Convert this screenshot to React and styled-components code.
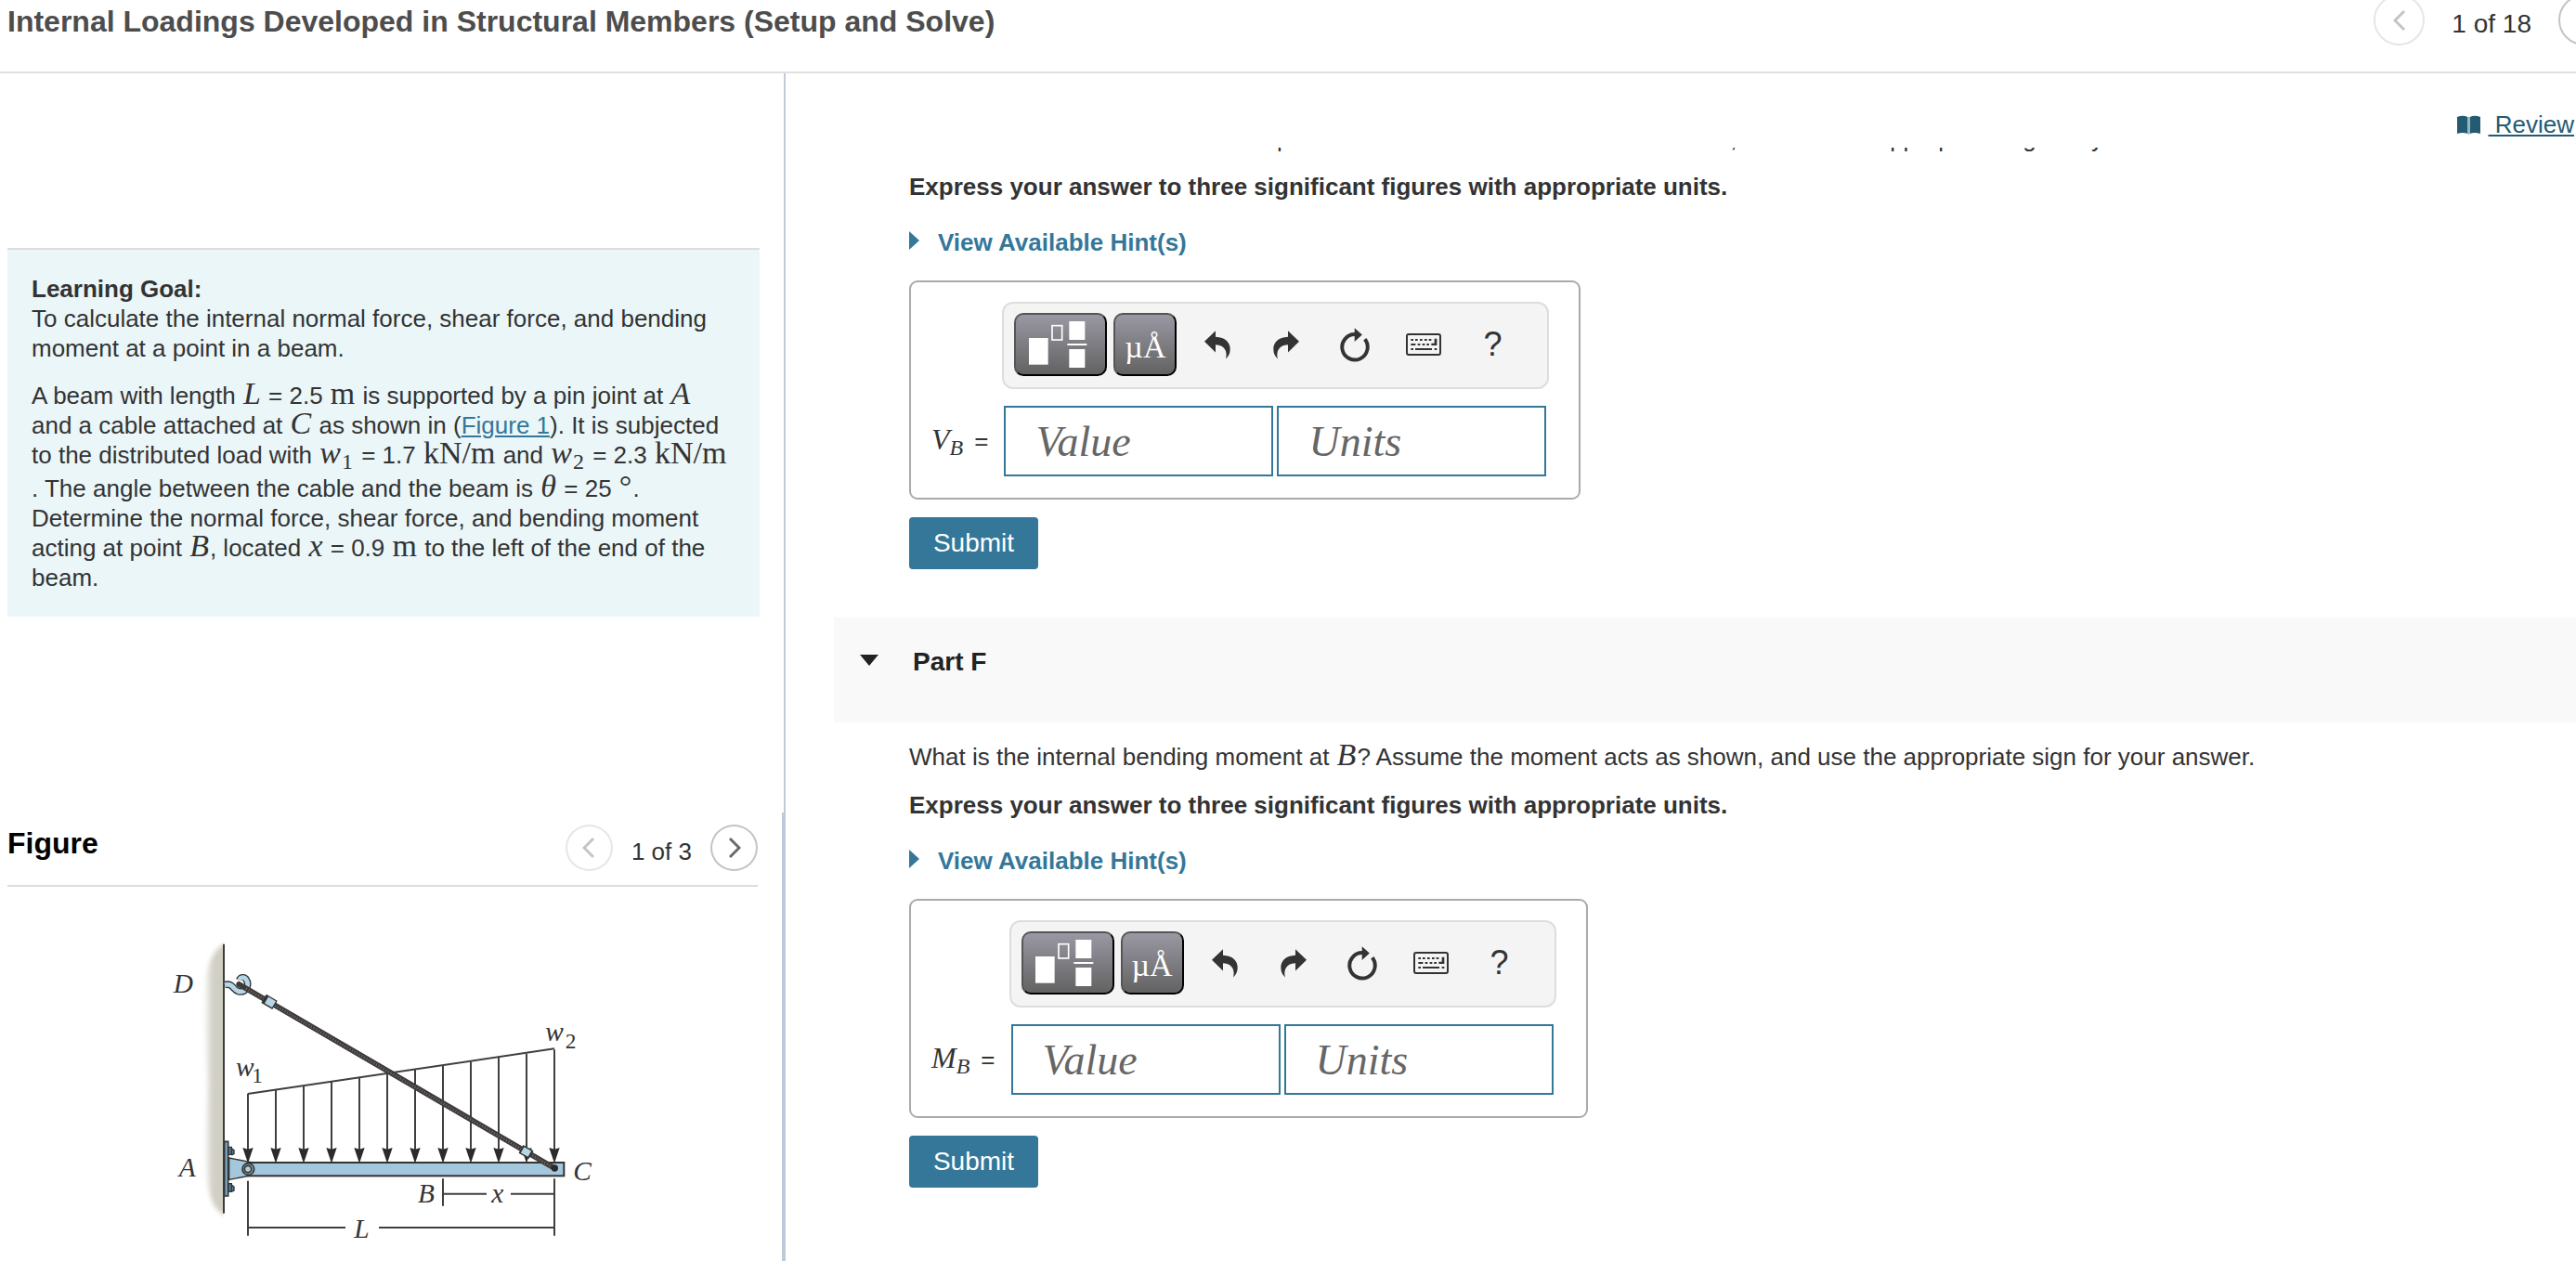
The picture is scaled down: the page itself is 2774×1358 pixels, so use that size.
import React from "react";
import styled, { createGlobalStyle } from "styled-components";

const GlobalStyle = createGlobalStyle`
  * {
    box-sizing: border-box;
  }

  body {
    margin: 0;
    color: #333;
    overflow: hidden;
    background-color: #fff;
    font-size: 26px;
    line-height: 32px;
    font-family: "Liberation Sans", Arial, sans-serif;
  }

  p,
  h1,
  h2 {
    margin: 0;
  }

  button,
  input {
    font-family: inherit;
  }
`;

const ChevronLeft = () => (
  <svg width="14" height="24" viewBox="0 0 14 24" fill="none" aria-hidden="true">
    <path d="M12 2L2 12l10 10" stroke="currentColor" strokeWidth="3" />
  </svg>
);

const ChevronRight = () => (
  <svg width="14" height="24" viewBox="0 0 14 24" fill="none" aria-hidden="true">
    <path d="M2 2l10 10L2 22" stroke="currentColor" strokeWidth="3" />
  </svg>
);

const BookIcon = () => (
  <svg width="25" height="22" viewBox="0 0 75 66" aria-hidden="true">
    <path d="M0 6C12 1 24 1 34 6V60C24 56 12 56 0 60Z" fill="currentColor" />
    <path d="M41 6C51 1 63 1 75 6V60C63 56 51 56 41 60Z" fill="currentColor" />
    <path d="M34 6h7v54l-3 3-4-3z" fill="#93b0bd" />
  </svg>
);

const TemplateIcon = () => (
  <svg width="63" height="52" viewBox="0 0 189 156" fill="#fff" aria-hidden="true">
    <rect x="0" y="57" width="62" height="86" />
    <rect x="75" y="17" width="32" height="46" fill="none" stroke="#fff" strokeWidth="5" />
    <rect x="130" y="3" width="51" height="60" />
    <rect x="124" y="75" width="63" height="6" />
    <rect x="130" y="93" width="51" height="60" />
  </svg>
);

const UndoIcon = () => (
  <svg width="28" height="31" viewBox="0 0 84 92" fill="#333" aria-hidden="true">
    <path d="M0 35L36 0V20C68 21 84 40 83 60C83 73 78 82 69 91C75 70 68 46 36 45V70Z" />
  </svg>
);

const RedoIcon = () => (
  <svg width="28" height="31" viewBox="0 0 84 92" fill="#333" aria-hidden="true">
    <path d="M84 35L48 0V20C16 21 0 40 1 60C1 73 6 82 15 91C9 70 16 46 48 45V70Z" />
  </svg>
);

const ResetIcon = () => (
  <svg width="32" height="37" viewBox="0 0 98 112" aria-hidden="true">
    <path
      d="M82 37A42 42 0 1 1 49 21"
      fill="none"
      stroke="#333"
      strokeWidth="12"
    />
    <path d="M48 0L73 22L48 45Z" fill="#333" />
  </svg>
);

const topKeys = [16, 30, 45, 60, 74];
const midKeys = [16, 23, 38, 53, 67];

const KeyboardIcon = () => (
  <svg width="38" height="24" viewBox="0 0 114 72" fill="#333" aria-hidden="true">
    <rect x="3" y="3" width="108" height="66" rx="6" fill="none" stroke="#333" strokeWidth="6" />
    {topKeys.map((x) => (
      <rect key={x} x={x} y="18" width="8" height="6" />
    ))}
    {midKeys.map((x) => (
      <rect key={x} x={x} y="33" width="8" height="6" />
    ))}
    <path d="M92 17h8v22H82v-7h10z" />
    <rect x="16" y="48" width="8" height="6" />
    <rect x="30" y="48" width="54" height="6" />
    <rect x="92" y="48" width="8" height="6" />
  </svg>
);

const loads = [0, 1, 2, 3, 4, 5, 6, 7, 8, 9, 10, 11];

const BeamFigure = () => (
  <Drawing viewBox="0 0 1560 1104" role="img" aria-label="Beam supported at A and by cable CD">
    <defs>
      <linearGradient id="wall" x1="0" x2="1" y1="0" y2="0">
        <stop offset="0" stopColor="#fff" />
        <stop offset="0.35" stopColor="#d2d0c4" />
        <stop offset="1" stopColor="#cfcdc1" />
      </linearGradient>
      <filter id="soft" x="-30%" y="-10%" width="160%" height="120%">
        <feGaussianBlur stdDeviation="8" />
      </filter>
      <clipPath id="wallSide">
        <rect x="170" y="50" width="102" height="940" />
      </clipPath>
    </defs>

    <g clipPath="url(#wallSide)">
      <path
        d="M290 75C240 85 212 150 208 260C206 380 222 460 218 570C214 700 210 780 220 850C228 910 250 955 290 960Z"
        fill="url(#wall)"
        filter="url(#soft)"
      />
    </g>
    <path d="M273 80V950" stroke="#3b3b3b" strokeWidth="6" />

    <g stroke="#3f3f3f" strokeWidth="6" fill="none">
      <path d="M350 564L1341 418" />
      {loads.map((i) => (
        <path key={i} d={`M${351 + i * 90} ${564 - i * 13}V760`} />
      ))}
    </g>

    <path d="M275 718h12v176h-12z" fill="#7fa9c0" stroke="#333" strokeWidth="5" />
    <path
      d="M288 736h10v24h-10zM298 740l8 6v12l-8 4M288 854h10v26h-10zM298 858l8 6v12l-8 4"
      fill="#557f98"
      stroke="#333"
      strokeWidth="4"
    />
    <path d="M290 771L360 785V828L290 841Z" fill="#a3c7dc" stroke="#333" strokeWidth="4" />
    <rect x="352" y="786" width="1020" height="43" fill="#a3c7dc" stroke="#333" strokeWidth="6" />
    <circle cx="352" cy="807" r="19" fill="#86a6b8" stroke="#333" strokeWidth="5" />
    <circle cx="351" cy="807" r="11" fill="#b7ccd7" stroke="#333" strokeWidth="5" />

    {loads.map((i) => (
      <path
        key={i}
        d={`M${351 + i * 90} 788l-17 -50l17 5l17 -5z`}
        fill="#2b2b2b"
      />
    ))}

    <path
      d="M276 212C306 204 300 232 326 234C350 234 354 206 346 196C340 184 326 188 324 196"
      fill="none"
      stroke="#333"
      strokeWidth="23"
    />
    <path
      d="M276 212C306 204 300 232 326 234C350 234 354 206 346 196C340 184 326 188 324 196"
      fill="none"
      stroke="#b5d6e8"
      strokeWidth="15"
    />
    <path d="M322 210L1341 804" stroke="#3d3a3a" strokeWidth="18" strokeLinecap="round" />
    <path d="M345 224L1335 801" stroke="#77706f" strokeWidth="8" strokeDasharray="3 6" />
    <path d="M402 256L438 277" stroke="#333" strokeWidth="32" />
    <path d="M411 261L435 275" stroke="#b5d6e8" strokeWidth="24" />
    <path d="M1233 742L1266 761" stroke="#333" strokeWidth="30" />
    <path d="M1238 745L1261 758" stroke="#b5d6e8" strokeWidth="22" />
    <circle cx="1342" cy="804" r="11" fill="#2b2b2b" />

    <g stroke="#3f3f3f" strokeWidth="6" fill="none">
      <path d="M351 845V1022M1341 838V1022M981 838V926" />
      <path d="M981 887H1122M1200 887H1341M351 996H666M774 996H1341" />
    </g>

    <text x="110" y="237">D</text>
    <text x="128" y="831">A</text>
    <text x="1402" y="842">C</text>
    <text x="900" y="915">B</text>
    <text x="1138" y="915">x</text>
    <text x="694" y="1028">L</text>
    <text x="312" y="506">w</text>
    <text x="1312" y="392">w</text>
    <Digit x="364" y="529">1</Digit>
    <Digit x="1376" y="417">2</Digit>
  </Drawing>
);

const Pager = ({ label, large }) => (
  <PagerRow $large={large}>
    <RoundButton $large={large} disabled aria-label="Previous">
      <ChevronLeft />
    </RoundButton>
    <PagerLabel $large={large}>{label}</PagerLabel>
    <RoundButton $large={large} aria-label="Next">
      {large ? null : <ChevronRight />}
    </RoundButton>
  </PagerRow>
);

const Answer = ({ symbol, id }) => (
  <>
    <Instruction>
      Express your answer to three significant figures with appropriate units.
    </Instruction>
    <HintButton type="button">
      <HintArrow />
      View Available Hint(s)
    </HintButton>
    <AnswerBox>
      <Toolbar>
        <DarkButton type="button" $wide aria-label="Templates">
          <TemplateIcon />
        </DarkButton>
        <DarkButton type="button" aria-label="Symbols">
          µÅ
        </DarkButton>
        <Tools>
          <ToolButton type="button" aria-label="Undo">
            <UndoIcon />
          </ToolButton>
          <ToolButton type="button" aria-label="Redo">
            <RedoIcon />
          </ToolButton>
          <ToolButton type="button" aria-label="Reset">
            <ResetIcon />
          </ToolButton>
          <ToolButton type="button" aria-label="Keyboard shortcuts">
            <KeyboardIcon />
          </ToolButton>
          <ToolButton type="button" aria-label="Help">
            ?
          </ToolButton>
        </Tools>
      </Toolbar>
      <AnswerLabel htmlFor={id}>
        <LabelVar>{symbol}</LabelVar>
        <SubVar>B</SubVar>
        <Equals>=</Equals>
      </AnswerLabel>
      <Fields>
        <Field id={id} type="text" placeholder="Value" />
        <Field type="text" placeholder="Units" aria-label="Units" />
      </Fields>
    </AnswerBox>
    <SubmitButton type="button">Submit</SubmitButton>
  </>
);

const App = () => {
  return (
    <Page>
      <GlobalStyle />
      <Header>
        <Title>
          Internal Loadings Developed in Structural Members (Setup and Solve)
        </Title>
        <Pager label="1 of 18" large />
      </Header>

      <Main>
        <Side>
          <GoalPane>
            <Goal>
              <p>
                <strong>Learning Goal:</strong>
                <br />
                To calculate the internal normal force, shear force, and bending
                moment at a point in a beam.
              </p>
              <p>
                A beam with length <Var>L</Var> = 2.5 <Unit>m</Unit> is supported
                by a pin joint at <Var>A</Var>
                <br />
                and a cable attached at <Var>C</Var> as shown in (
                <FigureLink href="#figure">Figure 1</FigureLink>). It is
                subjected
                <br />
                to the distributed load with <Var>w</Var>
                <SubNum>1</SubNum> = 1.7 <Unit>kN/m</Unit> and <Var>w</Var>
                <SubNum>2</SubNum> = 2.3 <Unit>kN/m</Unit>
                <br />. The angle between the cable and the beam is{" "}
                <Var>θ</Var> = 25 <Degree>°</Degree>.
                <br />
                Determine the normal force, shear force, and bending moment
                acting at point <Var>B</Var>, located <Var>x</Var> = 0.9{" "}
                <Unit>m</Unit> to the left of the end of the beam.
              </p>
            </Goal>
          </GoalPane>

          <FigurePane id="figure">
            <FigureHead>
              <h2>Figure</h2>
              <Pager label="1 of 3" />
            </FigureHead>
            <BeamFigure />
          </FigurePane>
        </Side>

        <Content>
          <ReviewRow>
            <BookIcon />
            <ReviewLink href="#review">&nbsp;Review</ReviewLink>
          </ReviewRow>
          <Scroll>
            <PartBody $scrolled>
              <p>
                What is the internal shear force at point <Var>B</Var>? Assume
                the shear acts as shown, and use the appropriate sign for your
                answer.
              </p>
              <Answer symbol="V" id="shear" />
            </PartBody>
            <PartHeader>
              <PartArrow />
              <h2>Part F</h2>
            </PartHeader>
            <PartBody>
              <p>
                What is the internal bending moment at <Var>B</Var>? Assume the
                moment acts as shown, and use the appropriate sign for your
                answer.
              </p>
              <Answer symbol="M" id="moment" />
            </PartBody>
          </Scroll>
        </Content>
      </Main>
    </Page>
  );
};

const Page = styled.div`
  height: 100vh;
  display: flex;
  overflow: hidden;
  flex-direction: column;
`;

const Header = styled.header`
  display: flex;
  flex: none;
  height: 79px;
  overflow: hidden;
  padding-left: 8px;
  align-items: flex-start;
  justify-content: space-between;
  border-bottom: 2px solid #e0e0e0;
`;

const Title = styled.h1`
  color: #4d4d4d;
  font-size: 32px;
  line-height: 46px;
`;

const PagerRow = styled.div`
  display: flex;
  align-items: center;
  gap: ${({ $large }) => ($large ? "29px" : "20px")};
  margin: ${({ $large }) => ($large ? "-6px -36px 0 0" : "0")};
`;

const RoundButton = styled.button`
  display: flex;
  padding: 0;
  color: #666d6d;
  border-radius: 50%;
  align-items: center;
  justify-content: center;
  background-color: #fff;
  border: 2px solid #c4c4c4;
  width: ${({ $large }) => ($large ? "55px" : "51px")};
  height: ${({ $large }) => ($large ? "55px" : "50px")};

  &:disabled {
    color: #c4c4c4;
    border-color: #e6e6e6;
  }
`;

const PagerLabel = styled.span`
  padding-top: 8px;
  font-size: ${({ $large }) => ($large ? "28px" : "26px")};
`;

const Main = styled.main`
  flex: 1;
  display: flex;
  min-height: 0;
`;

const Side = styled.aside`
  flex: none;
  width: 846px;
  display: flex;
  flex-direction: column;
`;

const GoalPane = styled.section`
  padding: 188px 26px 211px 8px;
  border-right: 2px solid #c3cad9;
`;

const Goal = styled.div`
  gap: 19px;
  display: flex;
  padding: 26px;
  flex-direction: column;
  border-top: 2px solid #ddd;
  background-color: #eaf6f8;
`;

const Var = styled.i`
  padding: 0 1px;
  line-height: 0;
  font-size: 34px;
  font-family: "Liberation Serif", "Times New Roman", serif;
`;

const LabelVar = styled(Var)`
  padding: 0;
  font-size: 32px;
`;

const Unit = styled(Var)`
  font-style: normal;
`;

const SubVar = styled.sub`
  line-height: 0;
  font-size: 24px;
  font-style: italic;
  font-family: "Liberation Serif", "Times New Roman", serif;
`;

const SubNum = styled(SubVar)`
  font-style: normal;
  padding-right: 2px;
`;

const Degree = styled(Unit)`
  line-height: 36px;
`;

const FigureLink = styled.a`
  color: #347799;
`;

const FigurePane = styled.section`
  flex: 1;
  padding: 13px 26px 0 8px;
  border-right: 4px solid #bccadb;
`;

const FigureHead = styled.div`
  display: flex;
  padding-bottom: 15px;
  justify-content: space-between;
  border-bottom: 2px solid #ddd;

  h2 {
    color: #000;
    font-size: 32px;
    line-height: 40px;
  }
`;

const Drawing = styled.svg`
  width: 520px;
  display: block;
  margin: 35px 0 0 142px;

  text {
    fill: #333;
    font-size: 88px;
    font-style: italic;
    font-family: "Liberation Serif", "Times New Roman", serif;
  }
`;

const Digit = styled.text`
  && {
    font-size: 70px;
    font-style: normal;
  }
`;

const Content = styled.section`
  flex: 1;
  min-width: 0;
`;

const ReviewRow = styled.div`
  gap: 9px;
  height: 80px;
  display: flex;
  color: #235b72;
  padding: 39px 2px 0 0;
  align-items: flex-start;
  justify-content: flex-end;

  svg {
    margin-top: 6px;
  }
`;

const ReviewLink = styled.a`
  color: inherit;
`;

const Scroll = styled.div`
  overflow: hidden;
  padding-left: 52px;
`;

const PartBody = styled.div`
  padding-left: 81px;
  padding-top: ${({ $scrolled }) => ($scrolled ? "0" : "21px")};
  margin-top: ${({ $scrolled }) => ($scrolled ? "-26px" : "0")};
`;

const Instruction = styled.p`
  margin-top: 20px;
  font-weight: 700;
`;

const HintButton = styled.button`
  gap: 20px;
  border: none;
  display: flex;
  padding: 0;
  color: #347799;
  cursor: pointer;
  font-size: 26px;
  font-weight: 700;
  line-height: 32px;
  margin: 28px 0 25px;
  background: none;
`;

const HintArrow = styled.span`
  margin-top: 4px;
  height: 20px;
  border-left: 11px solid #347799;
  border-top: 10px solid transparent;
  border-bottom: 10px solid transparent;
`;

const AnswerBox = styled.div`
  display: grid;
  row-gap: 18px;
  column-gap: 15px;
  width: max-content;
  border-radius: 9px;
  align-items: center;
  border: 2px solid #aaa;
  padding: 21px 32px 23px 22px;
  grid-template-columns: auto auto;
`;

const Toolbar = styled.div`
  gap: 7px;
  width: 589px;
  height: 94px;
  display: flex;
  grid-column: 2;
  padding: 10px 11px;
  border-radius: 12px;
  border: 2px solid #ddd;
  background-color: #f4f4f4;
`;

const DarkButton = styled.button`
  color: #fff;
  height: 68px;
  display: flex;
  font-size: 34px;
  border-radius: 10px;
  align-items: center;
  justify-content: center;
  border: 2px solid;
  border-color: #555 #000 #000 #555;
  font-family: "Liberation Serif", "Times New Roman", serif;
  width: ${({ $wide }) => ($wide ? "100px" : "68px")};
  padding: ${({ $wide }) => ($wide ? "0 6px 0 0" : "6px 0 0")};
  background: linear-gradient(#9a98a3, #626262);
`;

const Tools = styled.div`
  display: flex;
`;

const ToolButton = styled.button`
  padding: 0;
  width: 74px;
  color: #333;
  height: 68px;
  border: none;
  display: flex;
  font-size: 36px;
  background: none;
  align-items: center;
  justify-content: center;
`;

const AnswerLabel = styled.label`
  grid-column: 1;
  white-space: nowrap;
`;

const Equals = styled.span`
  margin-left: 12px;
`;

const Fields = styled.div`
  gap: 4px;
  display: flex;
  padding-left: 2px;
`;

const Field = styled.input`
  width: 290px;
  height: 76px;
  color: #333;
  font-size: 46px;
  border-radius: 0;
  font-style: italic;
  padding: 0 32px;
  border: 2px solid #347799;
  font-family: "Liberation Serif", "Times New Roman", serif;

  &::placeholder {
    opacity: 1;
    color: #666;
  }
`;

const SubmitButton = styled.button`
  color: #fff;
  height: 56px;
  width: 139px;
  border: none;
  display: block;
  font-size: 28px;
  margin-top: 19px;
  border-radius: 4px;
  background-color: #347799;
`;

const PartHeader = styled.div`
  gap: 37px;
  display: flex;
  color: #222;
  margin-top: 52px;
  padding: 32px 28px 49px;
  background-color: #f9f9f9;

  h2 {
    font-size: 28px;
    line-height: 32px;
  }
`;

const PartArrow = styled.span`
  width: 20px;
  height: 12px;
  margin-top: 8px;
  border-top: 12px solid #222;
  border-left: 10px solid transparent;
  border-right: 10px solid transparent;
`;

export default App;
